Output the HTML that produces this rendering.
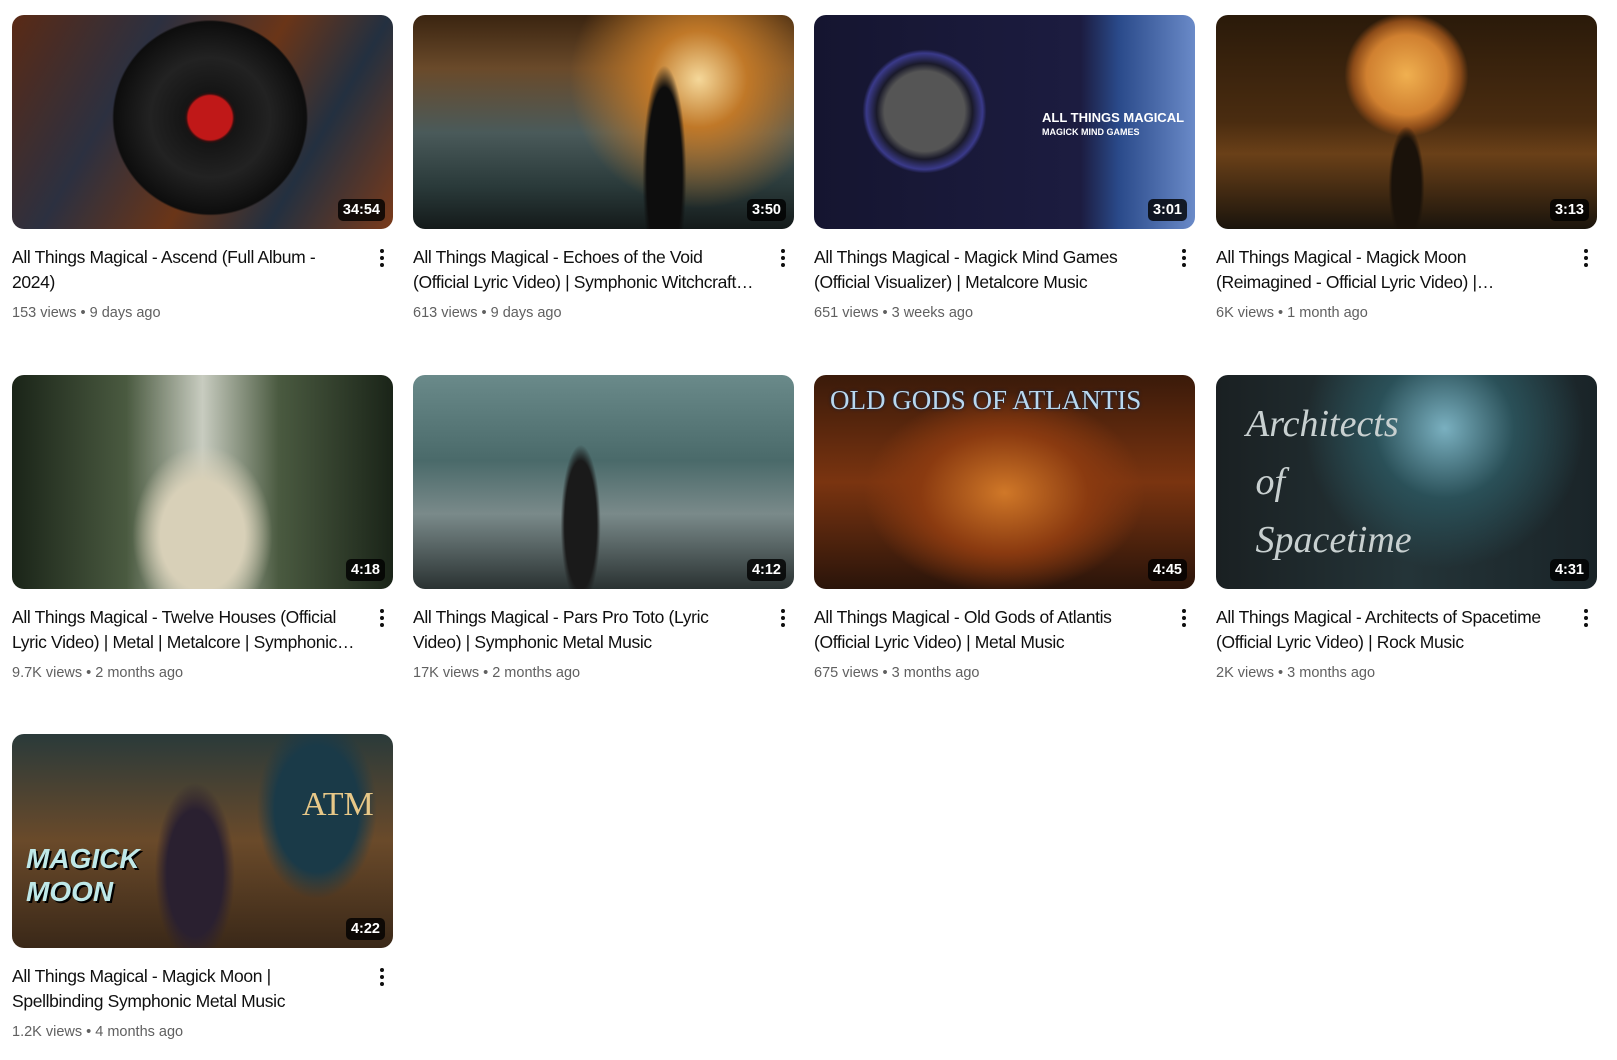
<!DOCTYPE html>
<html><head><meta charset="utf-8">
<style>
*{margin:0;padding:0;box-sizing:border-box}
body{width:1617px;height:1060px;background:#fff;font-family:"Liberation Sans",Arial,sans-serif;overflow:hidden;position:relative}
.card{position:absolute;width:381px}
.th{width:381px;height:214px;border-radius:12px;position:relative;overflow:hidden}
.d{position:absolute;right:8px;bottom:8px;background:rgba(0,0,0,.8);color:#fff;font-weight:bold;font-size:14.5px;line-height:22px;padding:0 5px;border-radius:5px}
.t{margin-top:16px;width:345px;font-size:17.5px;letter-spacing:-0.35px;line-height:25px;color:#0f0f0f;height:50px;overflow:hidden;display:-webkit-box;-webkit-line-clamp:2;-webkit-box-orient:vertical}
.m{margin-top:8px;font-size:14.5px;line-height:20px;color:#606060}
.dots{position:absolute;right:9px;top:234px;width:4px}
.dots i{display:block;width:4px;height:4px;border-radius:50%;background:#0f0f0f;margin-bottom:3px}
</style></head><body>

<div class="card" style="left:12px;top:15px">
<div class="th" style="background:radial-gradient(circle at 52% 48%,#c01818 0 22px,#301010 24px,#151515 26px,#222 60px,#0d0d0d 96px,transparent 98px),linear-gradient(120deg,#5a2a15,#2c3040 30%,#6a3518 55%,#233040 75%,#7a3a1a)">
<span class="d">34:54</span></div>
<div class="dots"><i></i><i></i><i></i></div>
<div class="t">All Things Magical - Ascend (Full Album - 2024)</div>
<div class="m">153 views • 9 days ago</div></div>

<div class="card" style="left:413px;top:15px">
<div class="th" style="background:radial-gradient(ellipse 22px 110px at 66% 75%,#0d0d0d 80%,transparent),radial-gradient(circle at 75% 30%,#f5d89a 0,#c07828 15%,transparent 40%),linear-gradient(180deg,#3a2410 0%,#6a4a2a 25%,#4a5a5a 55%,#2a3a3a 80%,#141a1a 100%)">
<span class="d">3:50</span></div>
<div class="dots"><i></i><i></i><i></i></div>
<div class="t">All Things Magical - Echoes of the Void (Official Lyric Video) | Symphonic Witchcraft Metal</div>
<div class="m">613 views • 9 days ago</div></div>

<div class="card" style="left:814px;top:15px">
<div class="th" style="background:radial-gradient(circle at 29% 45%,#555 0 40px,#1a1a2a 48px,#3a3a8a 58px,transparent 62px),linear-gradient(90deg,#151530 0%,#1c1c40 70%,#2a4a8a 80%,#6a8ac8 100%)">
<div style="position:absolute;left:228px;top:96px;color:#fff;font-weight:bold;font-size:13px;line-height:13px">ALL THINGS MAGICAL<br><span style="font-size:9px">MAGICK MIND GAMES</span></div>
<span class="d">3:01</span></div>
<div class="dots"><i></i><i></i><i></i></div>
<div class="t">All Things Magical - Magick Mind Games (Official Visualizer) | Metalcore Music</div>
<div class="m">651 views • 3 weeks ago</div></div>

<div class="card" style="left:1216px;top:15px">
<div class="th" style="background:radial-gradient(ellipse 18px 60px at 50% 80%,#1a120a 80%,transparent),radial-gradient(circle at 50% 28%,#f0b050 0,#d08030 40px,#8a4a18 54px,transparent 62px),linear-gradient(180deg,#2a1a0a 0%,#4a2c10 50%,#6a4018 65%,#1a140c 100%)">
<span class="d">3:13</span></div>
<div class="dots"><i></i><i></i><i></i></div>
<div class="t">All Things Magical - Magick Moon (Reimagined - Official Lyric Video) | Symphonic Metal</div>
<div class="m">6K views • 1 month ago</div></div>

<div class="card" style="left:12px;top:375px">
<div class="th" style="background:radial-gradient(ellipse 70px 90px at 50% 75%,#d8d0b8 60%,transparent),linear-gradient(90deg,#1a2418,#4a5a40 30%,#c8ccc0 50%,#4a5a40 70%,#1a2418)">
<span class="d">4:18</span></div>
<div class="dots"><i></i><i></i><i></i></div>
<div class="t">All Things Magical - Twelve Houses (Official Lyric Video) | Metal | Metalcore | Symphonic Metal</div>
<div class="m">9.7K views • 2 months ago</div></div>

<div class="card" style="left:413px;top:375px">
<div class="th" style="background:radial-gradient(ellipse 20px 80px at 44% 70%,#1a1a1a 80%,transparent),linear-gradient(180deg,#6a8a8a 0%,#4a6a6a 40%,#7a8a8a 65%,#2a3232 100%)">
<span class="d">4:12</span></div>
<div class="dots"><i></i><i></i><i></i></div>
<div class="t">All Things Magical - Pars Pro Toto (Lyric Video) | Symphonic Metal Music</div>
<div class="m">17K views • 2 months ago</div></div>

<div class="card" style="left:814px;top:375px">
<div class="th" style="background:radial-gradient(ellipse 140px 100px at 50% 55%,#d07828 0,#8a3a10 60%,transparent),linear-gradient(180deg,#3a1a0a,#7a3410 50%,#2a140a)">
<div style="position:absolute;left:16px;top:10px;color:#b8d8f0;font-family:'Liberation Serif',serif;font-size:27px;white-space:nowrap;text-shadow:0 0 3px #124">OLD GODS OF ATLANTIS</div>
<span class="d">4:45</span></div>
<div class="dots"><i></i><i></i><i></i></div>
<div class="t">All Things Magical - Old Gods of Atlantis (Official Lyric Video) | Metal Music</div>
<div class="m">675 views • 3 months ago</div></div>

<div class="card" style="left:1216px;top:375px">
<div class="th" style="background:radial-gradient(circle at 60% 25%,#7ab0c0 0,#2a5058 25%,transparent 50%),linear-gradient(90deg,#1a2022,#243438 50%,#1a2428)">
<div style="position:absolute;left:30px;top:20px;color:#c8d0d0;font-family:'Liberation Serif',serif;font-style:italic;font-size:38px;line-height:58px">Architects<br>&nbsp;of<br>&nbsp;Spacetime</div>
<span class="d">4:31</span></div>
<div class="dots"><i></i><i></i><i></i></div>
<div class="t">All Things Magical - Architects of Spacetime (Official Lyric Video) | Rock Music</div>
<div class="m">2K views • 3 months ago</div></div>

<div class="card" style="left:12px;top:734px">
<div class="th" style="background:radial-gradient(ellipse 40px 90px at 48% 65%,#2a2030 70%,transparent),radial-gradient(ellipse 60px 90px at 80% 35%,#1a3a48 70%,transparent),linear-gradient(180deg,#2a3a3a 0%,#6a4a2a 50%,#3a2818 100%)">
<div style="position:absolute;left:14px;top:108px;color:#bfe8e8;font-weight:bold;font-style:italic;font-size:28px;line-height:33px;text-shadow:2px 2px 0 #000">MAGICK<br>MOON</div>
<div style="position:absolute;left:290px;top:52px;color:#e8c888;font-family:'Liberation Serif',serif;font-size:34px">ATM</div>
<span class="d">4:22</span></div>
<div class="dots"><i></i><i></i><i></i></div>
<div class="t">All Things Magical - Magick Moon | Spellbinding Symphonic Metal Music</div>
<div class="m">1.2K views • 4 months ago</div></div>

</body></html>
